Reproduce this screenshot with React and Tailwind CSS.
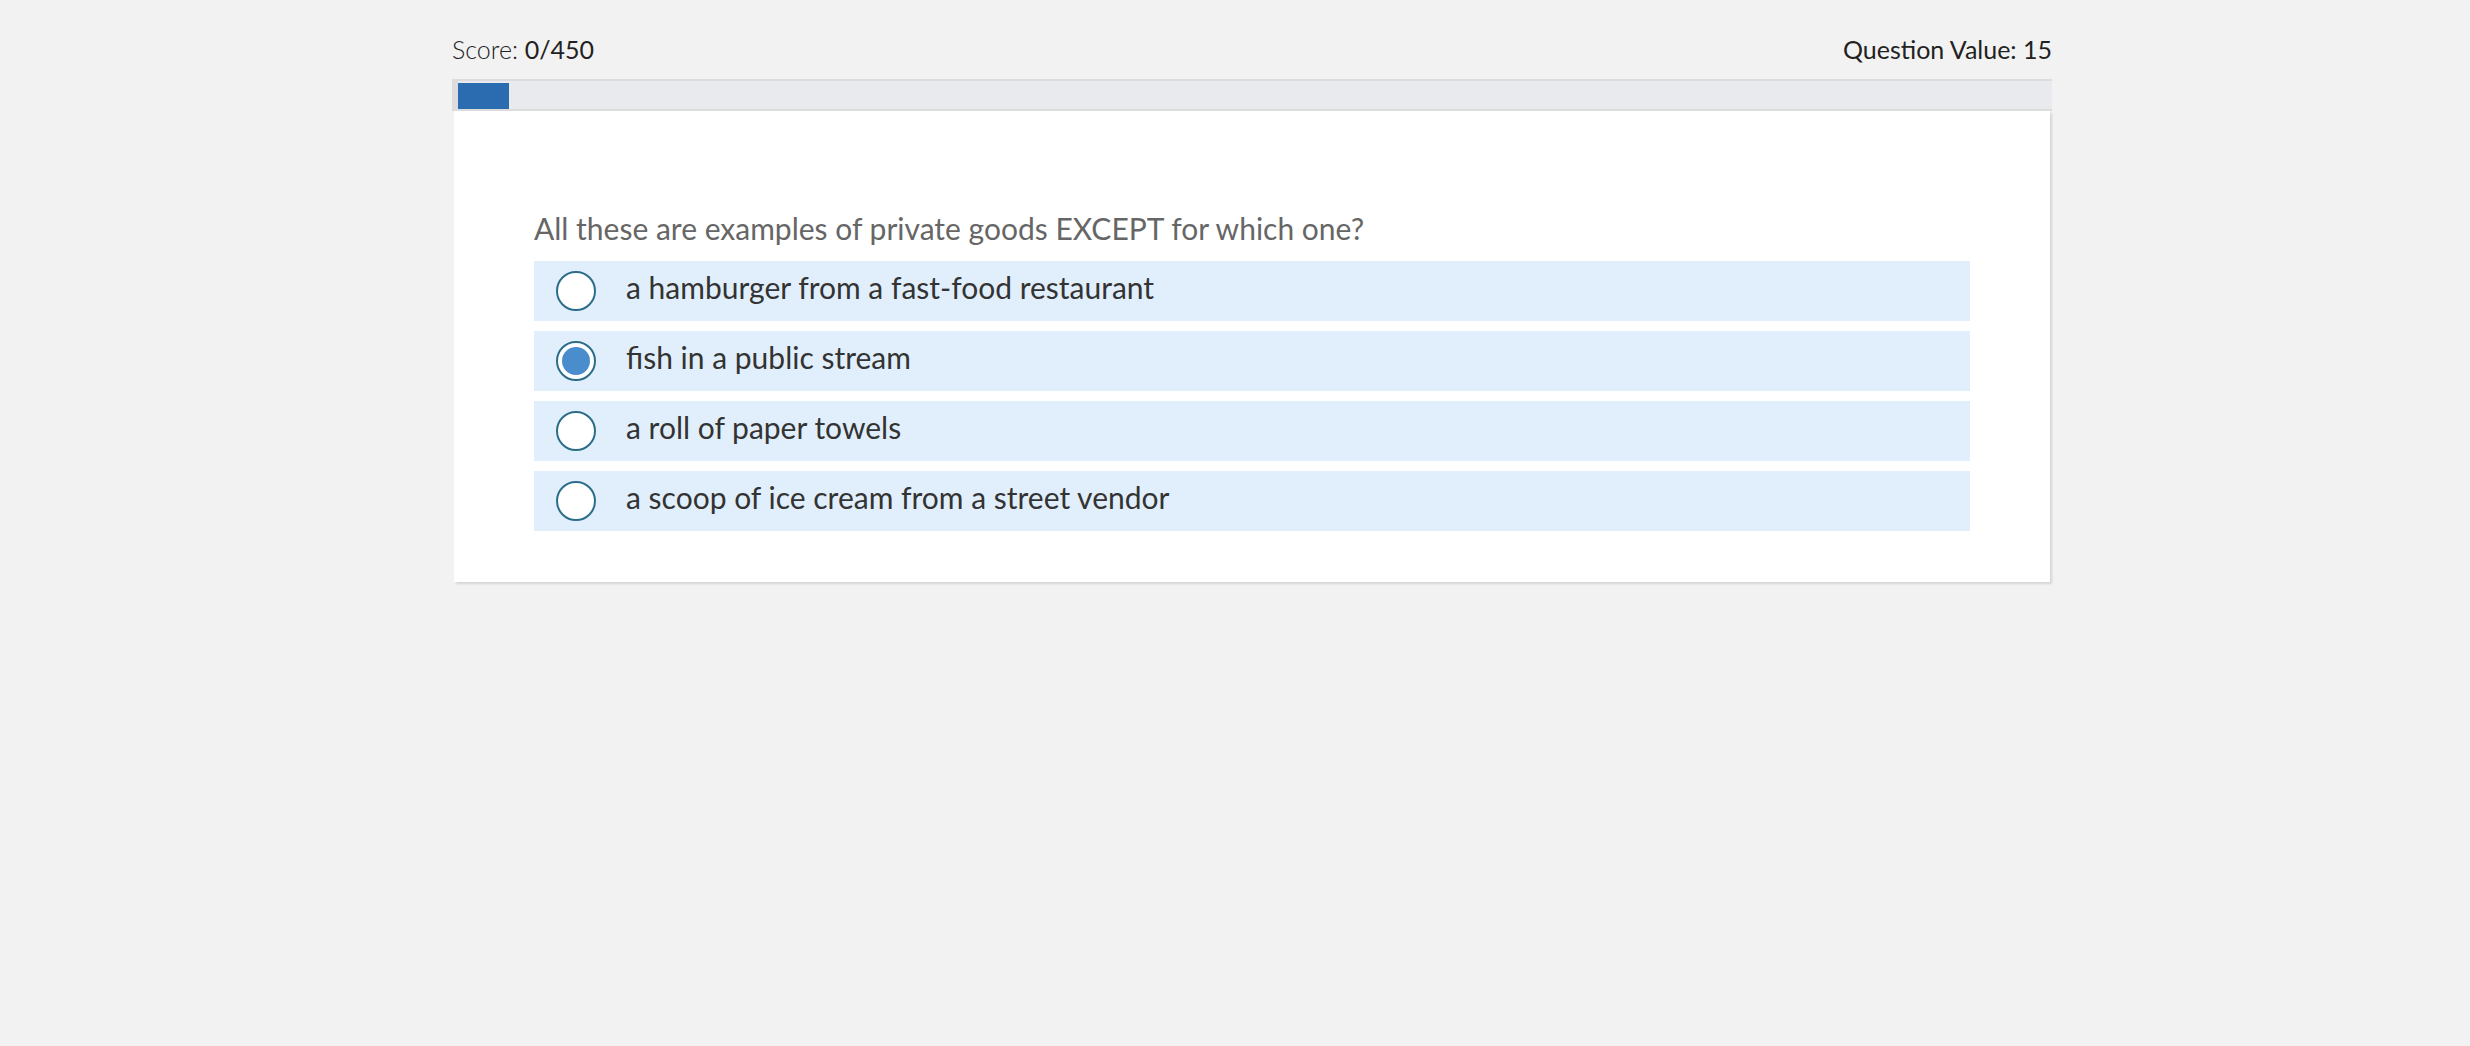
import React, { useState } from "react";

const options = [
  "a hamburger from a fast-food restaurant",
  "fish in a public stream",
  "a roll of paper towels",
  "a scoop of ice cream from a street vendor",
];

function Radio({ checked }) {
  return (
    <span className="flex h-[40px] w-[40px] shrink-0 items-center justify-center rounded-full border-2 border-[#2c6d8a] bg-white">
      {checked && <span className="h-[28px] w-[28px] rounded-full bg-[#4a8dcd]" />}
    </span>
  );
}

export default function App() {
  const [selected, setSelected] = useState(1);

  return (
    <div className="min-h-screen bg-[#f2f2f2] font-['Lato',sans-serif]">
      <div className="ml-[452px] w-[1600px]">
        {/* Header */}
        <div className="flex h-[79px] items-end justify-between pb-[14px] text-[25px] leading-[32px] text-[#222]">
          <div>
            <span className="font-light text-[#222]">Score: </span>
            <span>0/450</span>
          </div>
          <div>Question Value: 15</div>
        </div>

        {/* Progress */}
        <div className="h-[32px] border-y-2 border-l-[6px] border-[#dcdcdc] bg-[#e9eaee] pt-[2px]">
          <div className="h-[26px] w-[51px] bg-[#2b6cb0]" />
        </div>

        {/* Card */}
        <div className="mx-[2px] bg-white px-[80px] pb-[51px] pt-[97px] shadow-[2px_2px_2px_rgba(0,0,0,0.12)]">
          <div className="mb-[13px] text-[30px] leading-[40px] text-[#666]">
            All these are examples of private goods EXCEPT for which one?
          </div>
          <div className="flex flex-col gap-[10px]">
            {options.map((opt, i) => (
              <button
                key={opt}
                type="button"
                onClick={() => setSelected(i)}
                className="flex h-[60px] items-center bg-[#e1effc] pl-[22px] text-left"
              >
                <Radio checked={selected === i} />
                <span className="ml-[30px] pb-[8px] text-[30px] leading-[40px] text-[#333]">{opt}</span>
              </button>
            ))}
          </div>
        </div>
      </div>
    </div>
  );
}
